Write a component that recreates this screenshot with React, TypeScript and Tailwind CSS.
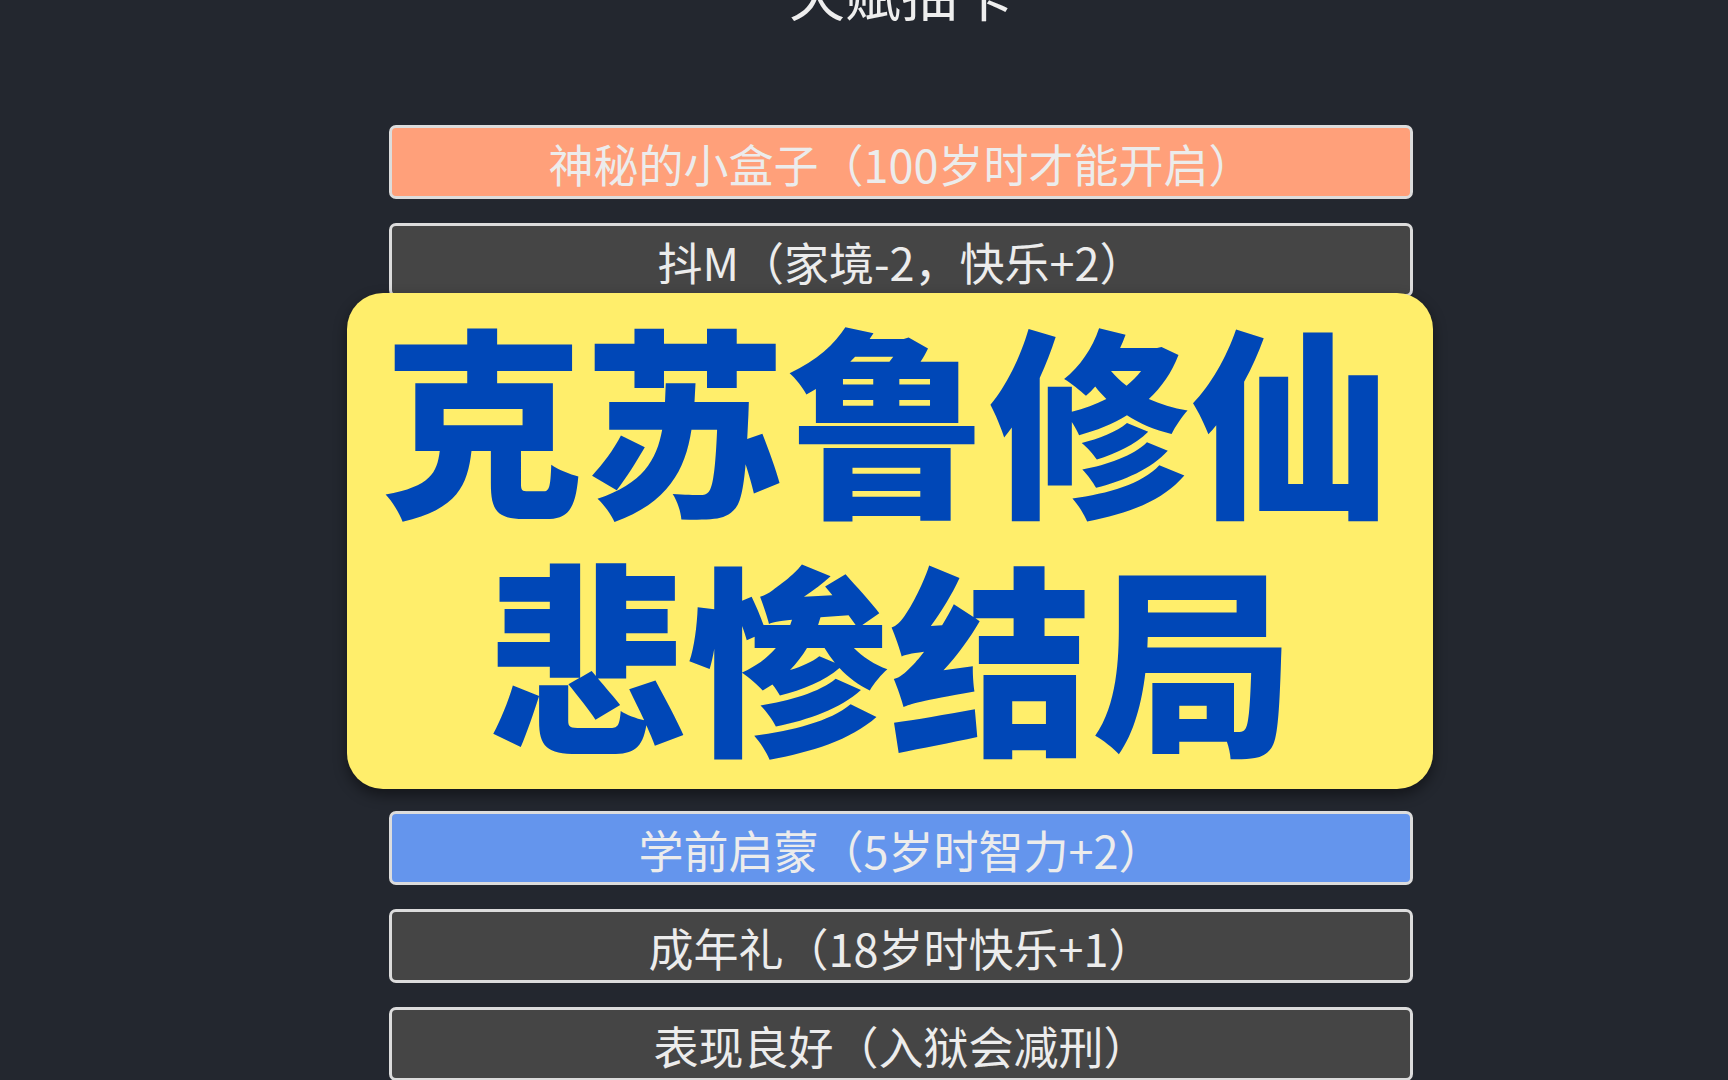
const talents = [
  { name: '神秘的小盒子（100岁时才能开启）', grade: 3 },
  { name: '抖M（家境-2，快乐+2）', grade: 0 },
  { name: '乡间微风（农村出生）', grade: 0 },
  { name: '天生残疾（体质-2）', grade: 0 },
  { name: '三十而立（30岁时家境+2）', grade: 1 },
  { name: '好运连连（快乐+1）', grade: 0 },
  { name: '骨骼惊奇（体质+3）', grade: 2 },
  { name: '学前启蒙（5岁时智力+2）', grade: 1 },
  { name: '成年礼（18岁时快乐+1）', grade: 0 },
  { name: '表现良好（入狱会减刑）', grade: 0 },
];

const gradeStyle: Record<number, string> = {
  0: 'bg-[#454545]',
  1: 'bg-[#6495ed]',
  2: 'bg-[#9370db]',
  3: 'bg-[#ffa07a]',
};

export default function App() {
  return (
    <div
      className="relative h-[1080px] w-[1728px] overflow-hidden bg-[#23272f]"
      style={{ fontFamily: '"Noto Sans CJK SC", "Noto Sans", sans-serif' }}
    >
      <div className="ml-[389px] w-[1024px]">
        <h1 className="mt-[-38px] h-[60px] text-center text-[56px] leading-[60px] text-[#eeeeee]">天赋抽卡</h1>

        <ul className="mt-[103px] flex flex-col gap-[24px]">
          {talents.map((t) => (
            <li
              key={t.name}
              className={`flex h-[74px] items-center justify-center rounded-[7px] border-[3px] border-[#dcdcdc] text-[45px] text-[#ececec] ${gradeStyle[t.grade]}`}
            >
              <span className="mt-[2px] leading-none">{t.name}</span>
            </li>
          ))}
        </ul>
      </div>

      {/* cover card */}
      <div className="absolute left-[347px] top-[293px] flex h-[496px] w-[1086px] flex-col items-center justify-center rounded-[36px] bg-[#ffee6b] shadow-[0_6px_14px_rgba(0,0,0,0.45)]">
        <div className="mt-[-16px] text-center text-[202px] font-black leading-[238px] text-[#0047b7]">
          <div className="mr-[6px]">克苏鲁修仙</div>
          <div>悲惨结局</div>
        </div>
      </div>
    </div>
  );
}
